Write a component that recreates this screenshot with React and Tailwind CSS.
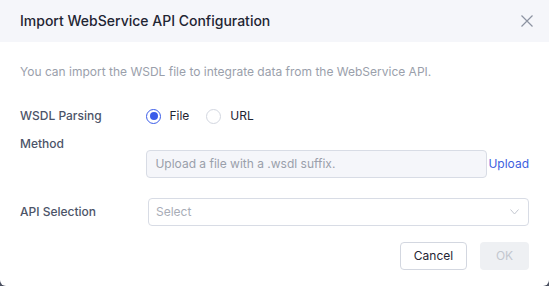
import React from "react";

export default function App() {
  return (
    <div className="w-[549px] h-[286px] bg-[#4b5060] overflow-hidden" style={{ fontFamily: "Inter, 'Noto Sans', sans-serif" }}>
      <div className="w-[549px] h-[286px] bg-white rounded-b-[6px] flex flex-col">
        <div className="h-[42px] bg-[#f5f6fa] flex items-center justify-between pl-[20px] pr-[16px] shrink-0">
          <div className="text-[14px] font-medium text-[#1f2533] leading-none">Import WebService API Configuration</div>
          <svg width="12" height="12" viewBox="0 0 12 12" className="text-[#8c93a1]">
            <path d="M0.5 0.5 L11.5 11.5 M11.5 0.5 L0.5 11.5" stroke="currentColor" strokeWidth="1.2" fill="none" />
          </svg>
        </div>
        <div className="px-[20px] pt-[22px]">
          <div className="text-[12px] text-[#9aa0ab] leading-[16px]">You can import the WSDL file to integrate data from the WebService API.</div>
          <div className="flex mt-[24px]">
            <div className="w-[128px] text-[12px] font-medium text-[#4c5468]">
              <div className="leading-[16px] mt-[4px]">WSDL Parsing</div>
              <div className="leading-[16px] mt-[12px]">Method</div>
            </div>
            <div className="flex-1 flex flex-col">
              <div className="flex items-center h-[24px] text-[12px] text-[#1f2533]">
                <span className="w-[15px] h-[15px] rounded-full border border-[#3a5ce9] flex items-center justify-center">
                  <span className="w-[8px] h-[8px] rounded-full bg-[#3a5ce9]" />
                </span>
                <span className="ml-[8px]">File</span>
                <span className="ml-[17px] w-[15px] h-[15px] rounded-full border border-[#d3d7e0] bg-white" />
                <span className="ml-[9px]">URL</span>
              </div>
              <div className="flex items-center mt-[22px]">
                <div className="w-[341px] h-[28px] bg-[#f5f6fa] border border-[#d8dce5] rounded-[4px] flex items-center pl-[8px] text-[12px] text-[#9aa0ab]">
                  Upload a file with a .wsdl suffix.
                </div>
                <span className="ml-[1px] text-[12px] text-[#3d5fe0]">Upload</span>
              </div>
            </div>
          </div>
          <div className="flex items-center mt-[20px]">
            <div className="w-[128px] text-[12px] font-medium text-[#4c5468]">API Selection</div>
            <div className="flex-1 h-[28px] border border-[#d8dce5] rounded-[4px] flex items-center justify-between pl-[7px] pr-[9px] text-[12px] text-[#a8adb7]">
              <span>Select</span>
              <svg width="9" height="6" viewBox="0 0 9 6">
                <path d="M0.5 0.5 L4.5 5 L8.5 0.5" stroke="#c3c7d0" strokeWidth="1" fill="none" />
              </svg>
            </div>
          </div>
          <div className="flex justify-end gap-[13px] mt-[16px]">
            <button className="w-[67px] h-[28px] border border-[#d3d7e0] rounded-[4px] bg-white text-[12px] text-[#1f2533]">Cancel</button>
            <button className="w-[49px] h-[28px] rounded-[4px] bg-[#eef0f3] text-[12px] text-[#c3c7cf]">OK</button>
          </div>
        </div>
      </div>
    </div>
  );
}
